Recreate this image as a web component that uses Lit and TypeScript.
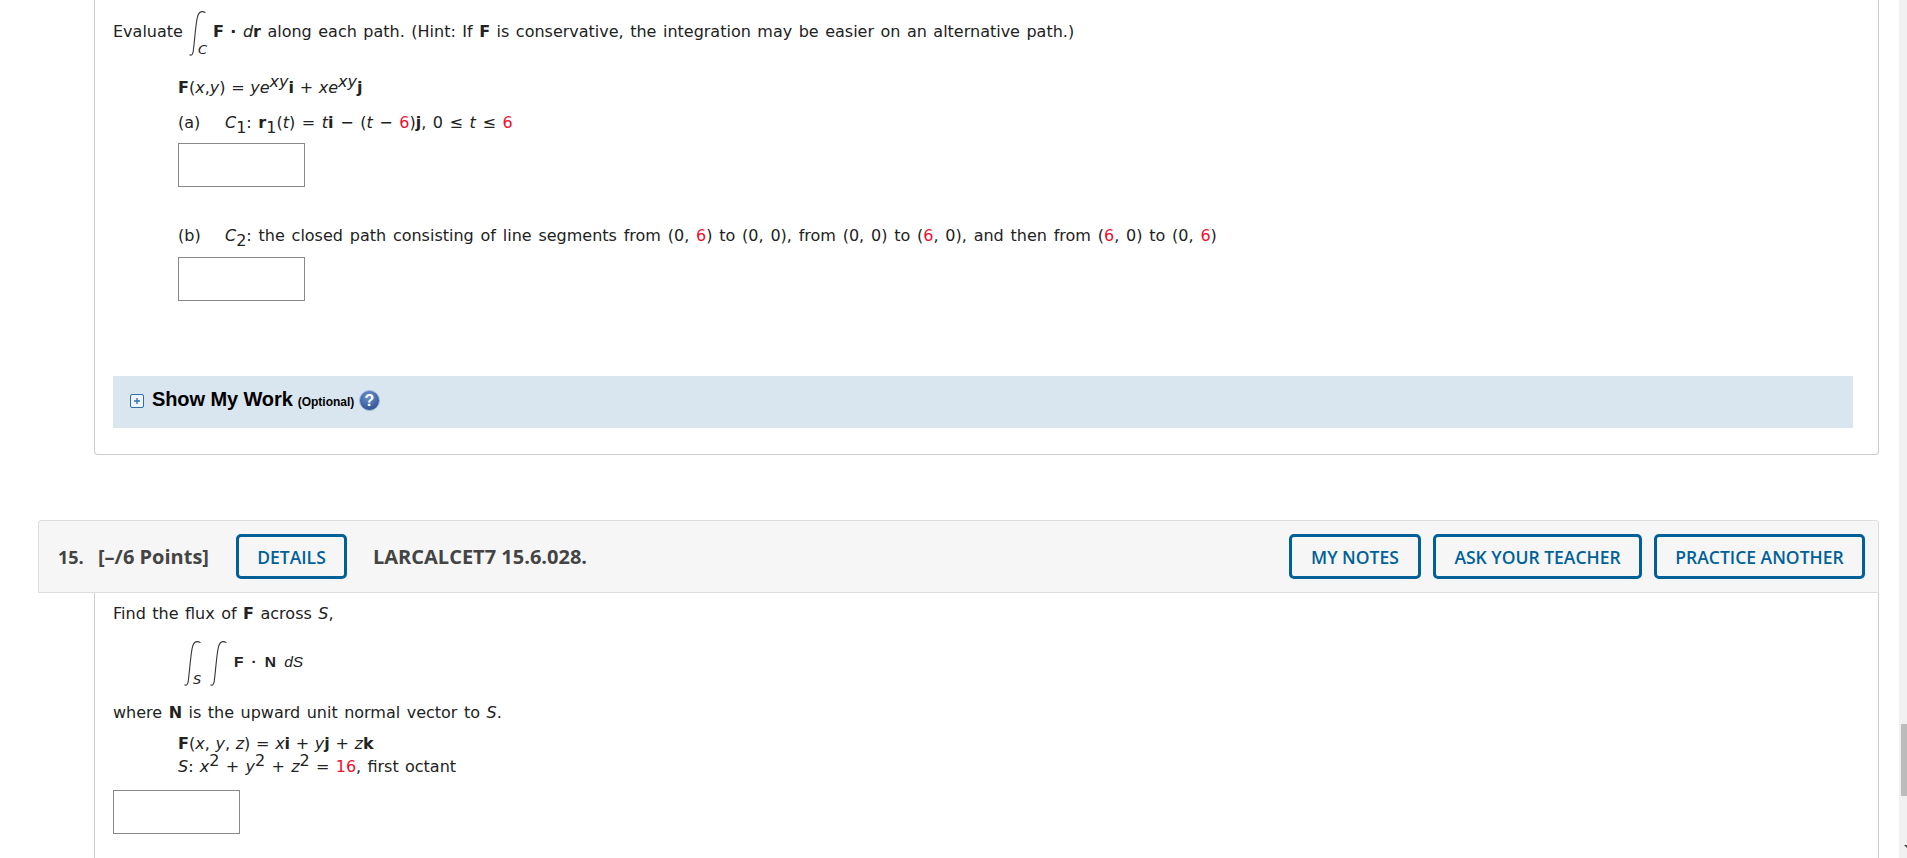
import { LitElement, html, css, svg } from "lit";
import { customElement } from "lit/decorators.js";

const integralPath = svg`<path d="M.5 43.800c1.800.8 3 .2 3.600-2.800C5.500 32 6 20 8 8 8.800 3 10.500.6 13 .6c1.500 0 2.500.4 3.500 1" fill="none" stroke="#333" stroke-width="1.100"/>`;

@customElement("app-root")
export class AppRoot extends LitElement {
  static styles = css`
    :host {
      display: flex;
      height: 858px;
      overflow: hidden;
      background: #fff;
      color: #222;
      font-family: "DejaVu Sans", "Liberation Sans", sans-serif;
      font-size: 16px;
      word-spacing: 1.4px;
    }
    .page {
      flex: 1;
      min-width: 0;
      padding-right: 20px;
    }
    .card {
      margin-left: 94px;
      border: 1px solid #ccc;
      border-top: 0;
      padding-left: 18px;
      padding-right: 25px;
    }
    .first {
      height: 455px;
      box-sizing: border-box;
      border-radius: 0 0 4px 4px;
      padding-top: 12px;
      margin-bottom: 65px;
    }
    .second {
      height: 300px;
      box-sizing: border-box;
      padding-top: 9px;
    }
    .line {
      line-height: 24px;
      height: 24px;
      white-space: pre;
    }
    .formula {
      word-spacing: 0.6px;
    }
    .part-a {
      word-spacing: 1.500px;
    }
    .part-b {
      word-spacing: 1.700px;
    }
    .surface {
      word-spacing: 1.200px;
    }
    .lead {
      display: flex;
      align-items: center;
      height: 45px;
      white-space: pre;
      margin-top: -3px;
    }
    .lead .integral {
      margin-left: 6px;
      margin-top: 3px;
    }
    .lead .rest {
      margin-left: 6px;
    }
    .indent {
      margin-left: 65px;
    }
    i {
      font-style: italic;
    }
    .red {
      color: #f01030;
    }
    sub,
    sup {
      font-size: 16px;
      line-height: 0;
    }
    sub {
      vertical-align: -5px;
    }
    sup {
      vertical-align: 6px;
    }
    .label {
      display: inline-block;
      width: 47px;
    }
    .answer {
      display: block;
      box-sizing: border-box;
      width: 127px;
      height: 44px;
      border: 1px solid #888;
      background: #fff;
    }
    .integral {
      position: relative;
      display: inline-flex;
      flex: none;
      width: 18px;
      height: 45px;
    }
    .integral span {
      position: absolute;
      left: 9px;
      bottom: -1px;
      font-size: 13px;
      font-style: italic;
      line-height: 14px;
    }
    .work {
      display: flex;
      align-items: center;
      height: 52px;
      margin-top: 75px;
      padding-left: 17px;
      background: #d9e5ef;
      color: #000;
      font-family: "Liberation Sans", Arial, sans-serif;
      word-spacing: 0;
    }
    .work svg {
      display: block;
      margin-top: -3px;
    }
    .work b {
      margin: -6px 0 0 8px;
      font-size: 20px;
      letter-spacing: -0.1px;
    }
    .work small {
      margin: 0 5px 0 5px;
      font-size: 12px;
      font-weight: bold;
    }
    .bar {
      display: flex;
      align-items: center;
      box-sizing: border-box;
      height: 73px;
      margin-left: 38px;
      padding: 0 13px 0 19px;
      background: #f6f6f6;
      border: 1px solid #ddd;
      border-radius: 3px 3px 0 0;
      color: #444;
      font-family: "Open Sans", sans-serif;
      font-size: 20px;
      font-weight: 700;
      word-spacing: 0;
    }
    .num {
      width: 40px;
      font-size: 18px;
    }
    .points {
      width: 138px;
    }
    .code {
      margin-left: 26px;
      flex: 1;
    }
    .btn {
      box-sizing: border-box;
      height: 45px;
      padding: 0;
      border: 3px solid #006199;
      border-radius: 5px;
      background: transparent;
      color: #006199;
      font: 600 17.500px "Open Sans", sans-serif;
      text-align: center;
    }
    .btn + .btn {
      margin-left: 12px;
    }
    .flux {
      display: flex;
      align-items: center;
      height: 50px;
      margin: 12px 0 0 71px;
      white-space: pre;
    }
    .flux .integral {
      width: 26px;
    }
    .flux .rest {
      margin: -2px 0 0 6px;
      font-family: "Liberation Sans", sans-serif;
      font-size: 15.500px;
      word-spacing: 3.800px;
    }
    .scroll {
      position: relative;
      flex: none;
      width: 8px;
      background: #f1f1f1;
    }
    .thumb {
      position: absolute;
      top: 724px;
      left: 2px;
      width: 6px;
      height: 72px;
      background: #bbb;
    }
    .arrow {
      position: absolute;
      top: 845px;
      left: 5px;
      width: 0;
      height: 0;
      border-left: 3px solid transparent;
      border-top: 3px solid #444;
    }
  `;

  private integral(sub: string) {
    return html`<span class="integral">
      <svg width="18" height="45" viewBox="0 0 18 45">${integralPath}</svg>
      <span>${sub}</span>
    </span>`;
  }

  render() {
    return html`
      <div class="page">
        <section class="card first">
          <div class="lead">Evaluate${this.integral("C")}<span class="rest"><b>F</b> <b>·</b> <i>d</i><b>r</b> along each path. (Hint: If <b>F</b> is conservative, the integration may be easier on an alternative path.)</span></div>
          <div class="line indent formula" style="margin-top:22px"><b>F</b>(<i>x</i>,<i>y</i>) = <i>y</i><i>e</i><sup><i>xy</i></sup><b>i</b> + <i>x</i><i>e</i><sup><i>xy</i></sup><b>j</b></div>
          <div class="line indent part-a" style="margin-top:11px"><span class="label">(a)</span><i>C</i><sub>1</sub>: <b>r</b><sub>1</sub>(<i>t</i>) = <i>t</i><b>i</b> − (<i>t</i> − <span class="red">6</span>)<b>j</b>, 0 ≤ <i>t</i> ≤ <span class="red">6</span></div>
          <input class="answer indent" style="margin-top:8px" />
          <div class="line indent part-b" style="margin-top:37px"><span class="label">(b)</span><i>C</i><sub>2</sub>: the closed path consisting of line segments from (0, <span class="red">6</span>) to (0, 0), from (0, 0) to (<span class="red">6</span>, 0), and then from (<span class="red">6</span>, 0) to (0, <span class="red">6</span>)</div>
          <input class="answer indent" style="margin-top:9px" />
          <div class="work">
            <svg width="14" height="14" viewBox="0 0 14 14"><rect x=".5" y=".5" width="13" height="13" rx="1.500" fill="#eef4fa" stroke="#2f6ea8"/><path d="M4 7h6M7 4v6" stroke="#2f6ea8" stroke-width="1.300"/></svg>
            <b>Show My Work</b><small>(Optional)</small>
            <svg width="21" height="21" viewBox="0 0 21 21"><defs><radialGradient id="help" cx=".45" cy=".3" r=".8"><stop offset="0" stop-color="#6f92cc"/><stop offset="1" stop-color="#24498c"/></radialGradient></defs><circle cx="10.500" cy="10.500" r="10" fill="url(#help)" stroke="#a9bfdc"/><text x="10.500" y="16" text-anchor="middle" font-family="Liberation Sans" font-size="16" font-weight="bold" fill="#fff">?</text></svg>
          </div>
        </section>

        <header class="bar">
          <span class="num">15.</span>
          <span class="points">[–/6 Points]</span>
          <button class="btn" style="width:111px">DETAILS</button>
          <span class="code">LARCALCET7 15.6.028.</span>
          <button class="btn" style="width:132px">MY NOTES</button>
          <button class="btn" style="width:209px">ASK YOUR TEACHER</button>
          <button class="btn" style="width:211px">PRACTICE ANOTHER</button>
        </header>

        <section class="card second">
          <div class="line">Find the flux of <b>F</b> across <i>S</i>,</div>
          <div class="flux">${this.integral("S")}<svg width="18" height="45" viewBox="0 0 18 45">${integralPath}</svg><span class="rest"><b>F</b> <b>·</b> <b>N</b> <i>dS</i></span></div>
          <div class="line" style="margin-top:13px">where <b>N</b> is the upward unit normal vector to <i>S</i>.</div>
          <div class="line indent formula" style="margin-top:7px"><b>F</b>(<i>x</i>, <i>y</i>, <i>z</i>) = <i>x</i><b>i</b> + <i>y</i><b>j</b> + <i>z</i><b>k</b></div>
          <div class="line indent surface" style="margin-top:-1px"><i>S</i>: <i>x</i><sup>2</sup> + <i>y</i><sup>2</sup> + <i>z</i><sup>2</sup> = <span class="red">16</span>, first octant</div>
          <input class="answer" style="margin-top:11px" />
        </section>
      </div>
      <div class="scroll"><div class="thumb"></div><div class="arrow"></div></div>
    `;
  }
}
